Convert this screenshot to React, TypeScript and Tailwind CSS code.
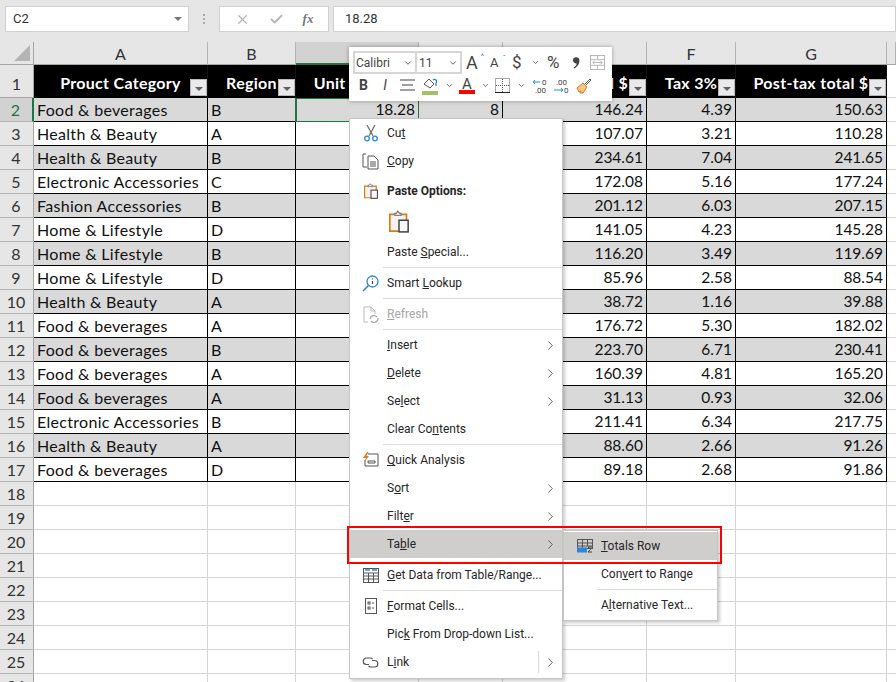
import type { ReactNode } from 'react'
import { ChevronRight, ChevronDown, Check, X } from 'lucide-react'

const sheetFont = "font-['Lato',sans-serif]"
const uiFont = "font-['Roboto',sans-serif]"

const rows = [
  ['Food & beverages', 'B', '18.28', '8', '146.24', '4.39', '150.63'],
  ['Health & Beauty', 'A', '', '', '107.07', '3.21', '110.28'],
  ['Health & Beauty', 'B', '', '', '234.61', '7.04', '241.65'],
  ['Electronic Accessories', 'C', '', '', '172.08', '5.16', '177.24'],
  ['Fashion Accessories', 'B', '', '', '201.12', '6.03', '207.15'],
  ['Home & Lifestyle', 'D', '', '', '141.05', '4.23', '145.28'],
  ['Home & Lifestyle', 'B', '', '', '116.20', '3.49', '119.69'],
  ['Home & Lifestyle', 'D', '', '', '85.96', '2.58', '88.54'],
  ['Health & Beauty', 'A', '', '', '38.72', '1.16', '39.88'],
  ['Food & beverages', 'A', '', '', '176.72', '5.30', '182.02'],
  ['Food & beverages', 'B', '', '', '223.70', '6.71', '230.41'],
  ['Food & beverages', 'A', '', '', '160.39', '4.81', '165.20'],
  ['Food & beverages', 'A', '', '', '31.13', '0.93', '32.06'],
  ['Electronic Accessories', 'B', '', '', '211.41', '6.34', '217.75'],
  ['Health & Beauty', 'A', '', '', '88.60', '2.66', '91.26'],
  ['Food & beverages', 'D', '', '', '89.18', '2.68', '91.86'],
]

const headers = ['Prouct Category', 'Region', 'Unit price $', 'Quantity', 'Pre-tax total $', 'Tax 3%', 'Post-tax total $']
const columns = ['A', 'B', 'C', 'D', 'E', 'F', 'G', '']
const emptyRows = [18, 19, 20, 21, 22, 23, 24, 25, 26]
const gridCols = 'grid grid-cols-[34px_174px_88px_123px_84px_144px_89px_151px_9px]'

function FilterButton() {
  return (
    <span className="absolute right-0 bottom-[2px] w-[17px] h-[17px] bg-[#e9e9ec] border border-[#b8b8b8] flex items-center justify-center">
      <span className="w-0 h-0 mt-[2px] border-x-[4px] border-x-transparent border-t-[4px] border-t-[#606060]" />
    </span>
  )
}

function RowNumber({ n, active }: { n: number; active?: boolean }) {
  return (
    <div className={`h-[24px] flex items-center justify-center pt-[1px] pr-[1px] text-[16px] border-b border-b-[#b4b4b4] ${active ? 'bg-[#d2d2d2] text-[#217346] border-r-2 border-r-[#217346]' : 'bg-[#e6e6e6] text-[#333] border-r border-r-[#a6a6a6]'}`}>
      {n}
    </div>
  )
}

function DataRow({ row, n }: { row: string[]; n: number }) {
  const band = n % 2 === 0 ? 'bg-[#d9d9d9]' : 'bg-white'
  return (
    <>
      <RowNumber n={n} active={n === 2} />
      {row.map((value, i) => (
        <div
          key={i}
          className={`h-[24px] px-[3px] pt-[1px] flex items-center whitespace-nowrap text-[#111] border-r border-b border-black ${band} ${i > 1 ? 'justify-end text-[15.5px]' : 'text-[16px] tracking-[0.3px]'} ${n === 2 && i === 2 ? 'outline-2 -outline-offset-1 outline-[#217346] border-white' : ''}`}
        >
          {value}
        </div>
      ))}
      <div className="h-[24px] bg-white border-b border-[#d4d4d4]" />
    </>
  )
}

function Sheet() {
  return (
    <div className={`${gridCols} ${sheetFont}`}>
      <div className="h-[23px] bg-[#e6e6e6] border-r border-b border-[#a6a6a6] flex items-end justify-end pr-[3px] pb-[3px]">
        <span className="w-0 h-0 border-l-[16px] border-l-transparent border-b-[16px] border-b-[#b4b4b4]" />
      </div>
      {columns.map((c, i) => (
        <div key={i} className={`h-[23px] pt-[2px] flex items-center justify-center text-[16px] text-[#333] border-r border-r-[#b4b4b4] ${c === 'C' ? 'bg-[#d2d2d2] border-b-2 border-b-[#217346]' : 'bg-[#e6e6e6] border-b border-b-[#a6a6a6]'}`}>
          {c}
        </div>
      ))}

      <div className="h-[33px] bg-[#e6e6e6] border-r border-b border-[#a6a6a6] flex items-end justify-center pb-[1px] text-[16px] text-[#333]">1</div>
      {headers.map((h) => (
        <div key={h} className="relative h-[33px] bg-black flex items-end justify-center border-r border-[#111]">
          <span className="text-white font-bold text-[16px] tracking-[0.3px] whitespace-nowrap mb-[3px]">{h}</span>
          <FilterButton />
        </div>
      ))}
      <div className="h-[33px] bg-white border-b border-[#d4d4d4]" />

      {rows.map((row, i) => (
        <DataRow key={i} row={row} n={i + 2} />
      ))}

      {emptyRows.map((n) => (
        <div key={n} className="contents">
          <RowNumber n={n} />
          {columns.map((c, i) => (
            <div key={i} className={`h-[24px] bg-white border-b border-[#d4d4d4] ${c ? 'border-r' : ''}`} />
          ))}
        </div>
      ))}
    </div>
  )
}

function FormulaBar() {
  return (
    <div className={`h-[42px] bg-[#e6e6e6] flex items-start pt-[6px] pl-[5px] gap-[4px] ${uiFont}`}>
      <div className="w-[184px] h-[26px] bg-white border border-[#d0d0d0] flex items-center justify-between pl-[7px] pr-[6px] text-[13px] text-[#333]">
        C2
        <span className="w-0 h-0 border-x-[4px] border-x-transparent border-t-[4px] border-t-[#777]" />
      </div>
      <div className="w-[22px] h-[26px] flex flex-col items-center justify-center gap-[2px]">
        <span className="w-[2px] h-[2px] bg-[#aaa]" />
        <span className="w-[2px] h-[2px] bg-[#aaa]" />
        <span className="w-[2px] h-[2px] bg-[#aaa]" />
      </div>
      <div className="w-[110px] h-[26px] bg-white border border-[#d0d0d0] flex items-center justify-around px-[5px] text-[#b4b4b4]">
        <X size={15} strokeWidth={2} />
        <Check size={15} strokeWidth={3} />
        <span className="font-['Liberation_Serif',serif] italic text-[13px] font-bold text-[#777]">fx</span>
      </div>
      <div className="flex-1 h-[26px] bg-white border border-[#d0d0d0] flex items-center pl-[11px] text-[13px] text-[#333]">18.28</div>
    </div>
  )
}

function Clipboard({ large }: { large?: boolean }) {
  return (
    <svg width={large ? 20 : 14} height={large ? 23 : 16} viewBox="0 0 24 27" fill="none">
      <path d="M1 5h20v20H1z" stroke="#e07b10" strokeWidth="2" fill="#f3f3f3" />
      <path d="M7 6V3.500h2L10.500 1l2 2.500h2V6z" stroke="#666" strokeWidth="1.300" fill="#fff" />
      <rect x="12" y="12" width="11" height="14" fill="#f7f7f7" stroke="#444" strokeWidth="1.800" />
    </svg>
  )
}

const menuIcons: Record<string, ReactNode> = {
  cut: (
    <svg width="16" height="18" viewBox="0 0 16 18" fill="none">
      <path d="M4 1l6 11M12 1L6 12" stroke="#666" strokeWidth="1.200" />
      <circle cx="4" cy="14.500" r="2.300" stroke="#2b88d8" strokeWidth="1.300" />
      <circle cx="12" cy="14.500" r="2.300" stroke="#2b88d8" strokeWidth="1.300" />
    </svg>
  ),
  copy: (
    <svg width="17" height="17" viewBox="0 0 17 17" fill="none" stroke="#555">
      <path d="M4 1H1v13h4" />
      <path d="M6 3h6l4 4v9H6z" fill="#fff" />
      <path d="M8 9h6M8 11h6M8 13h6" />
    </svg>
  ),
  paste: <Clipboard />,
  lookup: (
    <svg width="17" height="17" viewBox="0 0 17 17" fill="none">
      <circle cx="10.500" cy="6.500" r="5.500" stroke="#2b88d8" strokeWidth="1.300" />
      <path d="M6.500 10.500L1 16" stroke="#2b88d8" strokeWidth="1.600" />
      <path d="M10.500 3.500v1M10.500 6v3" stroke="#444" strokeWidth="1.200" />
    </svg>
  ),
  refresh: (
    <svg width="16" height="17" viewBox="0 0 16 17" fill="none" stroke="#bbb">
      <path d="M5 16H1V1h7l4 4v3" />
      <path d="M8 1v4h4" />
      <path d="M7 13a4 4 0 0 1 7-2M15 12a4 4 0 0 1-7 3" stroke="#aaa" strokeWidth="1.300" />
    </svg>
  ),
  quick: (
    <svg width="17" height="16" viewBox="0 0 17 16" fill="none">
      <path d="M6 2h10v12H3V8" stroke="#555" />
      <path d="M6 9h7v2H6z" stroke="#555" />
      <path d="M5 0L1 6h3L2 10l5-6H4.500L6.500 0z" fill="#e8781a" />
    </svg>
  ),
  getData: (
    <svg width="16" height="15" viewBox="0 0 16 15" fill="none" stroke="#555">
      <rect x="0.500" y="0.500" width="15" height="14" />
      <path d="M1 5h14M1 8h14M1 11h14M5.500 5v10M10.500 5v10" />
      <path d="M2 2h5M9 2h5" stroke="#2b88d8" strokeWidth="1.500" />
    </svg>
  ),
  format: (
    <svg width="12" height="16" viewBox="0 0 12 16" fill="none" stroke="#555">
      <rect x="0.500" y="0.500" width="11" height="15" />
      <rect x="3" y="4" width="2" height="2" />
      <rect x="3" y="9" width="2" height="2" />
      <path d="M7 5h2M7 10h2" />
    </svg>
  ),
  link: (
    <svg width="17" height="11" viewBox="0 0 17 11" fill="none" stroke="#555" strokeWidth="1.200">
      <path d="M7 7.500H4.500a3 3 0 0 1 0-6.500h4a3 3 0 0 1 2 1" />
      <path d="M10 3.500h2.500a3 3 0 0 1 0 6.500h-4a3 3 0 0 1-2-1" />
    </svg>
  ),
  totals: (
    <svg width="16" height="14" viewBox="0 0 16 14" fill="none" stroke="#555">
      <rect x="0.500" y="0.500" width="15" height="9" />
      <path d="M1 4h14M1 7h14M5.500 1v12M10.500 1v6" />
      <rect x="0.500" y="9" width="9" height="4" fill="#2b88d8" stroke="#2b88d8" />
      <path d="M15 8h-4l2.500 2.500L11 13h4" stroke="#444" />
    </svg>
  ),
}

function MenuItem({ icon, children, arrow, active, disabled, height = 'h-[28px]', split }: {
  icon?: string
  children: ReactNode
  arrow?: boolean
  active?: boolean
  disabled?: boolean
  height?: string
  split?: boolean
}) {
  return (
    <div className={`${height} flex items-center text-[12px] ${active ? 'bg-[#cfcecc]' : ''} ${disabled ? 'text-[#a6a6a6]' : 'text-[#262626]'}`}>
      <span className="w-[37px] shrink-0 flex justify-center pl-[4px]">{icon && menuIcons[icon]}</span>
      <span className="flex-1 whitespace-nowrap">{children}</span>
      {split && <span className="w-px h-[22px] bg-[#d9d9d9]" />}
      {arrow && <ChevronRight size={15} strokeWidth={1.300} className="mx-[4px] text-[#444]" />}
    </div>
  )
}

function Separator() {
  return <div className="ml-[33px] my-[1px] h-px bg-[#dcdcdc]" />
}

function ContextMenu() {
  return (
    <div className={`absolute left-[349px] top-[118px] w-[214px] h-[561px] bg-white border border-[#c6c6c6] shadow-[2px_2px_3px_rgba(0,0,0,0.2)] ${uiFont}`}>
      <MenuItem icon="cut">Cu<u>t</u></MenuItem>
      <MenuItem icon="copy"><u>C</u>opy</MenuItem>
      <div className="h-[2px]" />
      <MenuItem icon="paste"><b className="font-bold">Paste Options:</b></MenuItem>
      <div className="h-[33px] pl-[39px] flex items-center"><Clipboard large /></div>
      <MenuItem>Paste <u>S</u>pecial...</MenuItem>
      <Separator />
      <MenuItem icon="lookup">Smart <u>L</u>ookup</MenuItem>
      <Separator />
      <MenuItem icon="refresh" disabled><u>R</u>efresh</MenuItem>
      <Separator />
      <MenuItem arrow><u>I</u>nsert</MenuItem>
      <MenuItem arrow><u>D</u>elete</MenuItem>
      <MenuItem arrow>Se<u>l</u>ect</MenuItem>
      <MenuItem>Clear Co<u>n</u>tents</MenuItem>
      <Separator />
      <MenuItem icon="quick"><u>Q</u>uick Analysis</MenuItem>
      <MenuItem arrow>S<u>o</u>rt</MenuItem>
      <MenuItem arrow>Filt<u>e</u>r</MenuItem>
      <MenuItem arrow active>Ta<u>b</u>le</MenuItem>
      <div className="h-[3px]" />
      <MenuItem icon="getData"><u>G</u>et Data from Table/Range...</MenuItem>
      <Separator />
      <MenuItem icon="format"><u>F</u>ormat Cells...</MenuItem>
      <MenuItem>Pic<u>k</u> From Drop-down List...</MenuItem>
      <MenuItem icon="link" arrow split>L<u>i</u>nk</MenuItem>
    </div>
  )
}

function SubMenu() {
  return (
    <div className={`absolute left-[563px] top-[530px] w-[155px] h-[91px] bg-white border border-[#c6c6c6] pt-[1px] shadow-[2px_2px_3px_rgba(0,0,0,0.2)] ${uiFont}`}>
      <MenuItem icon="totals" active><u>T</u>otals Row</MenuItem>
      <MenuItem>Con<u>v</u>ert to Range</MenuItem>
      <Separator />
      <MenuItem>A<u>l</u>ternative Text...</MenuItem>
    </div>
  )
}

function MiniToolbar() {
  return (
    <div className={`absolute left-[349px] top-[47px] w-[263px] h-[54px] bg-white shadow-[0_0_4px_rgba(0,0,0,0.35)] px-[4px] pt-[4px] text-[#444] ${uiFont}`}>
      <div className="flex items-center h-[23px]">
        <div className="w-[64px] h-[23px] border-2 border-[#d6d6d6] flex items-center justify-between pl-[1px] pr-[2px] text-[12px]">
          Calibri<ChevronDown size={10} strokeWidth={2} />
        </div>
        <div className="w-[45px] h-[23px] border-2 border-l-0 border-[#d6d6d6] flex items-center justify-between pl-[2px] pr-[2px] text-[12px]">
          11<ChevronDown size={10} strokeWidth={2} />
        </div>
        <span className="ml-[4px] w-[18px] text-[18px] leading-none relative">A<span className="absolute -top-[1px] right-0 text-[#2b88d8] text-[8px]">^</span></span>
        <span className="ml-[6px] w-[16px] text-[13px] leading-none relative">A<span className="absolute -top-[1px] right-0 text-[#2b88d8] text-[8px]">ˇ</span></span>
        <span className="ml-[6px] w-[9px] text-[17px] leading-none">$</span>
        <ChevronDown size={9} strokeWidth={2} className="ml-[10px]" />
        <span className="ml-[7px] w-[14px] text-[17px] leading-none">%</span>
        <svg className="ml-[11px]" width="8" height="12" viewBox="0 0 8 12" fill="#444">
          <path d="M1 3.500a3.200 3.200 0 1 1 6.400 0c0 4-2.400 6.500-5.400 8l-.5-.8c1.800-1.200 2.900-2.400 3.200-4.200A3.200 3.200 0 0 1 1 3.500z" />
        </svg>
        <svg className="ml-[10px]" width="15" height="15" viewBox="0 0 16 16" fill="none" stroke="#b4b4b4">
          <rect x="0.500" y="0.500" width="15" height="15" />
          <path d="M1 5h14M1 11h14M8 1v4M8 11v4M3 8h10M3 8l2-2M3 8l2 2M13 8l-2-2M13 8l-2 2" />
        </svg>
      </div>
      <div className="flex items-center h-[25px] -mt-[1px]">
        <span className="w-[21px] text-center text-[14px] font-bold">B</span>
        <span className="w-[22px] text-center text-[14px] italic">I</span>
        <svg className="ml-[4px]" width="15" height="13" viewBox="0 0 15 13" stroke="#444">
          <path d="M0 1h15M2 6h11M0 11h15" strokeWidth="1.200" />
        </svg>
        <svg className="ml-[7px]" width="16" height="19" viewBox="0 0 16 19" fill="none">
          <path d="M2 8l5-5 5 5-4 4z" stroke="#555" />
          <path d="M11 4a2 2 0 0 1 3 3v3" stroke="#2b88d8" strokeWidth="1.300" />
          <rect x="0" y="15" width="16" height="4" fill="#a4c263" />
        </svg>
        <ChevronDown size={9} strokeWidth={2} className="ml-[7px]" />
        <span className="ml-[5px] w-[16px] h-[25px] relative text-center text-[15px] leading-[22px]">
          A<span className="absolute left-0 right-0 bottom-[4px] h-[4px] bg-[#ff0000]" />
        </span>
        <ChevronDown size={9} strokeWidth={2} className="ml-[6px]" />
        <svg className="ml-[5px]" width="15" height="15" viewBox="0 0 15 15" fill="none" stroke="#555" strokeDasharray="1 1">
          <path d="M0.500 0.500h14v14h-14zM7.500 1v13M1 7.500h13" />
          <path d="M0 14.500h15" stroke="#222" strokeDasharray="none" />
        </svg>
        <ChevronDown size={9} strokeWidth={2} className="ml-[7px]" />
        <svg className="ml-[6px]" width="16" height="16" viewBox="0 0 16 16" fill="none">
          <path d="M8 4H1M3 2L1 4l2 2" stroke="#2b88d8" />
          <text x="10" y="7" fontSize="8" fill="#444">0</text>
          <text x="3" y="15" fontSize="8" fill="#444">.00</text>
        </svg>
        <svg className="ml-[5px]" width="16" height="16" viewBox="0 0 16 16" fill="none">
          <text x="3" y="7" fontSize="8" fill="#444">.00</text>
          <path d="M1 12h9M8 10l2 2-2 2" stroke="#2b88d8" />
          <text x="11" y="15" fontSize="8" fill="#444">0</text>
        </svg>
        <svg className="ml-[7px]" width="16" height="16" viewBox="0 0 16 16" fill="none">
          <path d="M1 10l6-5 4 4-4 6H4l1-2-2 1z" fill="#f5c48a" stroke="#e07b10" />
          <path d="M9 6l5-5 1 1-5 5" stroke="#555" />
        </svg>
      </div>
    </div>
  )
}

export default function App() {
  return (
    <div className="relative w-[896px] h-[682px] overflow-hidden bg-white">
      <FormulaBar />
      <Sheet />
      <ContextMenu />
      <SubMenu />
      <MiniToolbar />
      <div className="absolute left-[347px] top-[526px] w-[375px] h-[38px] border-2 border-[#ff0000]" />
    </div>
  )
}
